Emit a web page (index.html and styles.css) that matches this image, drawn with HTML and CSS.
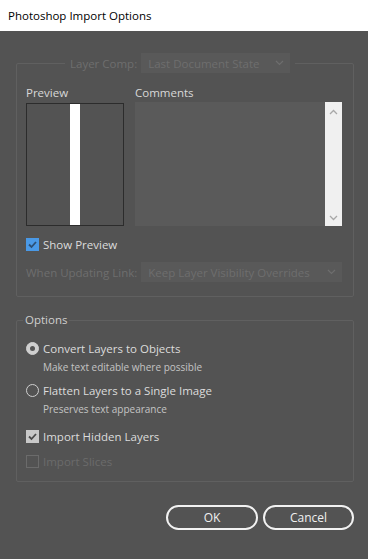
FILE: index.html
```html
<!DOCTYPE html>
<html lang="en">
<head>
  <meta charset="UTF-8">
  <title>Photoshop Import Options</title>
  <link rel="stylesheet" href="styles.css">
</head>
<body>
  <div class="titlebar">Photoshop Import Options</div>
  <div class="dialog">
    <fieldset class="group group-top">
      <legend class="comp">
        <span class="dim">Layer Comp:</span>
        <span class="select select-comp">Last Document State
          <svg class="chev" width="9" height="6" viewBox="0 0 9 6"><path d="M1 1l3.5 3.5L8 1" fill="none" stroke="currentColor" stroke-width="1.2"/></svg>
        </span>
      </legend>
      <div class="panes">
        <div class="pane">
          <div class="label">Preview</div>
          <div class="preview"><div class="bar"></div></div>
        </div>
        <div class="pane pane-wide">
          <div class="label">Comments</div>
          <div class="comments">
            <div class="scroll">
              <svg width="9" height="6" viewBox="0 0 9 6"><path d="M1 5l3.5-3.5L8 5" fill="none" stroke="#a8a8a8" stroke-width="1.3"/></svg>
              <svg width="9" height="6" viewBox="0 0 9 6"><path d="M1 1l3.5 3.5L8 1" fill="none" stroke="#a8a8a8" stroke-width="1.3"/></svg>
            </div>
          </div>
        </div>
      </div>
      <div class="row row-show">
        <span class="box box-blue">
          <svg width="13" height="13" viewBox="0 0 13 13"><path d="M3 6.5l2.5 2.5L10 4" fill="none" stroke="#2d4f73" stroke-width="1.8"/></svg>
        </span>
        Show Preview
      </div>
      <div class="link-row">
        <span class="dim">When Updating Link:</span>
        <span class="select select-link">Keep Layer Visibility Overrides
          <svg class="chev" width="9" height="6" viewBox="0 0 9 6"><path d="M1 1l3.5 3.5L8 1" fill="none" stroke="currentColor" stroke-width="1.2"/></svg>
        </span>
      </div>
    </fieldset>

    <fieldset class="group group-opts">
      <legend class="opts">Options</legend>
      <div class="row"><span class="radio radio-on"></span>Convert Layers to Objects</div>
      <div class="hint">Make text editable where possible</div>
      <div class="row row-next"><span class="radio"></span>Flatten Layers to a Single Image</div>
      <div class="hint">Preserves text appearance</div>
      <div class="row row-hidden">
        <span class="box box-gray">
          <svg width="13" height="13" viewBox="0 0 13 13"><path d="M3 6.5l2.5 2.5L10 4" fill="none" stroke="#4a4a4a" stroke-width="1.8"/></svg>
        </span>
        Import Hidden Layers
      </div>
      <div class="row row-off"><span class="box box-off"></span>Import Slices</div>
    </fieldset>

    <div class="buttons">
      <button class="btn">OK</button>
      <button class="btn">Cancel</button>
    </div>
  </div>
</body>
</html>
```

FILE: styles.css
```css
*{margin: 0; padding: 0; box-sizing: border-box;}
body{background: #535353; font-family: "Open Sans", "Noto Sans", sans-serif; font-size: 11.5px; color: #d8d8d8; width: 368px; height: 559px; overflow: hidden;}

.titlebar{height: 31px; background: #fff; color: #000; padding-left: 8px; line-height: 31px; font-size: 11.5px;}

.dialog{padding: 0 14px 0 16px;}

.group{border: 1px solid #606060; border-radius: 2px; padding: 0 11px 0 9px; min-width: 0;}
.group-top{margin-top: 22px; padding-top: 12px; padding-bottom: 14px;}
.group-opts{margin-top: 15px; padding-top: 12px; padding-bottom: 12px;}

legend.comp{margin-left: 39px; padding: 0 5px; display: flex; align-items: center; gap: 4px; height: 20px;}
legend.opts{margin-left: -3px; padding: 0 2px; line-height: 16px; color: #cfcfcf;}

.dim{color: #6e6e6e;}
.select{display: flex; align-items: center; justify-content: space-between; height: 20px; background: #595959; color: #6e6e6e; padding: 0 6px 0 7px;}
.select-comp{width: 149px;}
.chev{flex: none;}

.panes{display: flex; gap: 11px;}
.pane{display: flex; flex-direction: column;}
.pane-wide{flex: 1;}
.label{line-height: 16px; margin-bottom: 2px; color: #d8d8d8;}
.preview{width: 98px; height: 123px; border: 1px solid #2c2c2c; display: flex; padding-left: 43px;}
.bar{width: 10px; background: #fff;}
.comments{height: 124px; margin-top: -1px; background: #5a5a5a; display: flex; justify-content: flex-end;}
.scroll{width: 17px; background: #f0f0f0; display: flex; flex-direction: column; justify-content: space-between; align-items: center; padding: 7px 0 5px;}

.row{display: flex; align-items: center; gap: 4px; height: 16px; color: #dcdcdc;}
.row-show{margin-top: 10px;}
.row-next{margin-top: 8px;}
.row-hidden{margin-top: 12px;}
.row-off{margin-top: 9px; color: #6b6b6b;}

.box{width: 13px; height: 13px; flex: none; display: block;}
.box svg{display: block;}
.box-blue{background: #4a99e6;}
.box-gray{background: #c8c8c8;}
.box-off{border: 1px solid #6b6b6b;}

.radio{width: 13px; height: 13px; flex: none; border-radius: 50%; border: 1px solid #cfcfcf;}
.radio-on{background: #cfcfcf; border-color: #cfcfcf; position: relative;}
.radio-on::after{content: ""; position: absolute; left: 3px; top: 3px; width: 5px; height: 5px; border-radius: 50%; background: #555;}

.hint{font-size: 10px; line-height: 14px; padding-left: 17px; margin-top: 4px; color: #c4c4c4;}

.link-row{display: flex; align-items: center; gap: 4px; margin-top: 10px;}
.select-link{flex: 1;}

.buttons{display: flex; justify-content: flex-end; gap: 5px; margin-top: 23px;}
.btn{width: 92px; height: 25px; border: 2px solid #f2f2f2; border-radius: 13px; background: transparent; color: #f0f0f0; font-family: inherit; font-size: 12px;}
.btn + .btn{width: 91px;}
```
